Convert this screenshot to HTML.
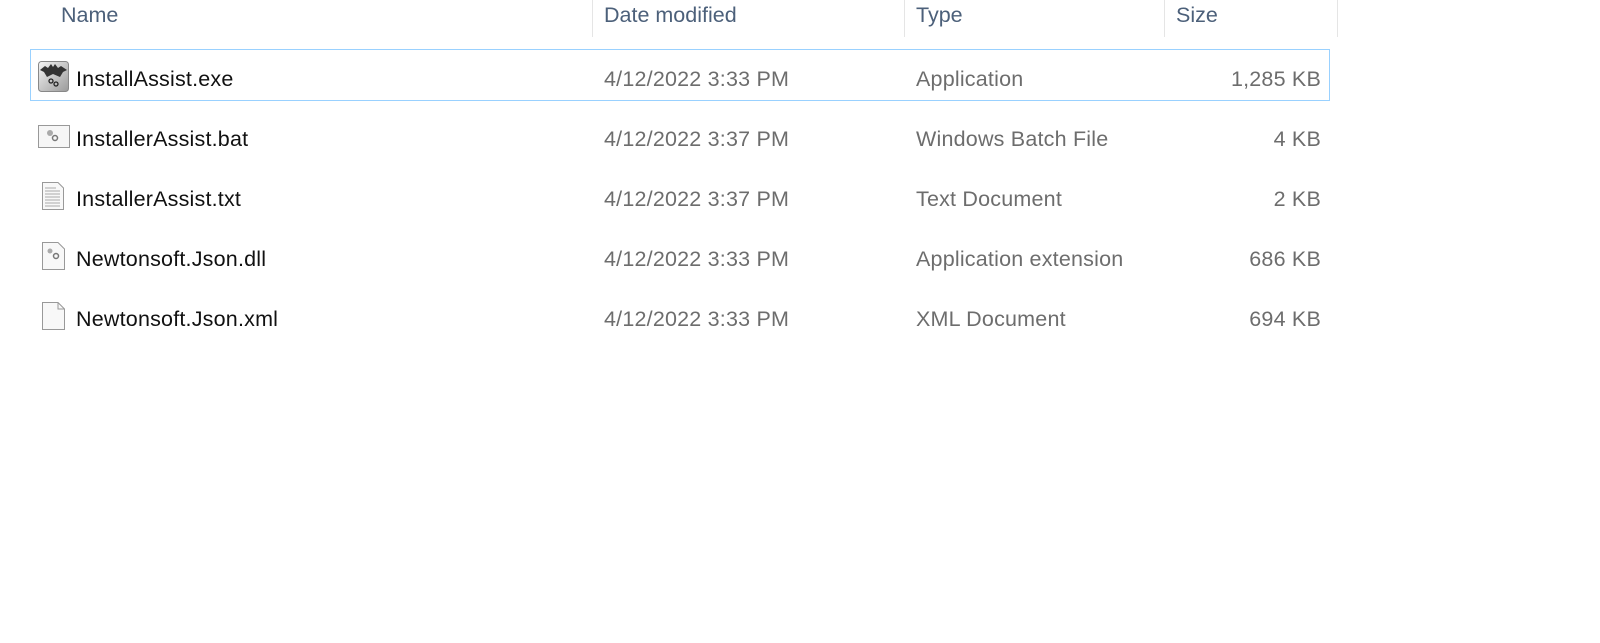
<!DOCTYPE html>
<html><head><style>
body{margin:0;width:1600px;height:643px;background:#fff;position:relative;overflow:hidden;font-family:"Liberation Sans",sans-serif;}
.h{position:absolute;top:3px;font-size:21.5px;color:#4c607a;}
.sep{position:absolute;top:0;width:1px;height:37px;background:#e5e5e5;}
.t{position:absolute;font-size:21.5px;white-space:nowrap;line-height:24px;letter-spacing:0.2px}
.n{color:#111;left:76px}
.g{color:#6d6d6d}
.r{right:279px;text-align:right}
.ic{position:absolute;left:38px}
</style></head><body>
<div class="h" style="left:61px">Name</div>
<div class="h" style="left:604px">Date modified</div>
<div class="h" style="left:916px">Type</div>
<div class="h" style="left:1176px">Size</div>
<div class="sep" style="left:592px"></div>
<div class="sep" style="left:904px"></div>
<div class="sep" style="left:1164px"></div>
<div class="sep" style="left:1337px"></div>
<div style="position:absolute;left:30px;top:49px;width:1298px;height:50px;border:1px solid #99d1ff;"></div>

<svg class="ic" style="top:61px" width="31" height="31" viewBox="0 0 31 31"><defs><linearGradient id="a" x1="0" y1="0" x2="1" y2="1"><stop offset="0" stop-color="#f4f4f4"/><stop offset="1" stop-color="#9a9a9a"/></linearGradient></defs><rect x="0.5" y="0.5" width="30" height="30" rx="3" fill="url(#a)" stroke="#888"/><path d="M2 9 L7 5 L10 7 L13 3 L15 6 L17 3 L20 7 L23 5 L29 9 L25 11 L22 16 L15 13 L9 16 L6 11Z" fill="#333"/><circle cx="13" cy="20" r="2" fill="none" stroke="#222" stroke-width="1.3"/><circle cx="18" cy="23" r="2" fill="none" stroke="#222" stroke-width="1.3"/></svg>
<div class="t n" style="top:67px">InstallAssist.exe</div>
<div class="t g" style="left:604px;top:67px">4/12/2022 3:33 PM</div>
<div class="t g" style="left:916px;top:67px">Application</div>
<div class="t g r" style="top:67px">1,285 KB</div>

<svg class="ic" style="top:125px" width="32" height="24" viewBox="0 0 32 24"><rect x="0.5" y="0.5" width="31" height="22" fill="#f6f6f6" stroke="#999"/><circle cx="12" cy="8" r="3" fill="#aaa"/><circle cx="17" cy="13" r="2.5" fill="none" stroke="#777" stroke-width="1.5"/></svg>
<div class="t n" style="top:127px">InstallerAssist.bat</div>
<div class="t g" style="left:604px;top:127px">4/12/2022 3:37 PM</div>
<div class="t g" style="left:916px;top:127px">Windows Batch File</div>
<div class="t g r" style="top:127px">4 KB</div>

<svg class="ic" style="top:182px;left:42px" width="22" height="28" viewBox="0 0 22 28"><path d="M0.5 0.5H16L21.5 6V27.5H0.5Z" fill="#f8f8f8" stroke="#999"/><g stroke="#aaa"><path d="M3 6H14M3 9H18M3 12H18M3 15H18M3 18H18M3 21H18M3 24H18"/></g></svg>
<div class="t n" style="top:187px">InstallerAssist.txt</div>
<div class="t g" style="left:604px;top:187px">4/12/2022 3:37 PM</div>
<div class="t g" style="left:916px;top:187px">Text Document</div>
<div class="t g r" style="top:187px">2 KB</div>

<svg class="ic" style="top:242px;left:42px" width="24" height="28" viewBox="0 0 24 28"><path d="M0.5 0.5H16L22.5 7V27.5H0.5Z" fill="#f8f8f8" stroke="#999"/><circle cx="8" cy="9" r="2.5" fill="#aaa"/><circle cx="14" cy="14" r="2.5" fill="none" stroke="#777" stroke-width="1.5"/></svg>
<div class="t n" style="top:247px">Newtonsoft.Json.dll</div>
<div class="t g" style="left:604px;top:247px">4/12/2022 3:33 PM</div>
<div class="t g" style="left:916px;top:247px">Application extension</div>
<div class="t g r" style="top:247px">686 KB</div>

<svg class="ic" style="top:302px;left:42px" width="24" height="28" viewBox="0 0 24 28"><path d="M0.5 0.5H16L22.5 7V27.5H0.5Z" fill="#f8f8f8" stroke="#999"/><path d="M16 0.5V7H22.5" fill="none" stroke="#999"/></svg>
<div class="t n" style="top:307px">Newtonsoft.Json.xml</div>
<div class="t g" style="left:604px;top:307px">4/12/2022 3:33 PM</div>
<div class="t g" style="left:916px;top:307px">XML Document</div>
<div class="t g r" style="top:307px">694 KB</div>
</body></html>
